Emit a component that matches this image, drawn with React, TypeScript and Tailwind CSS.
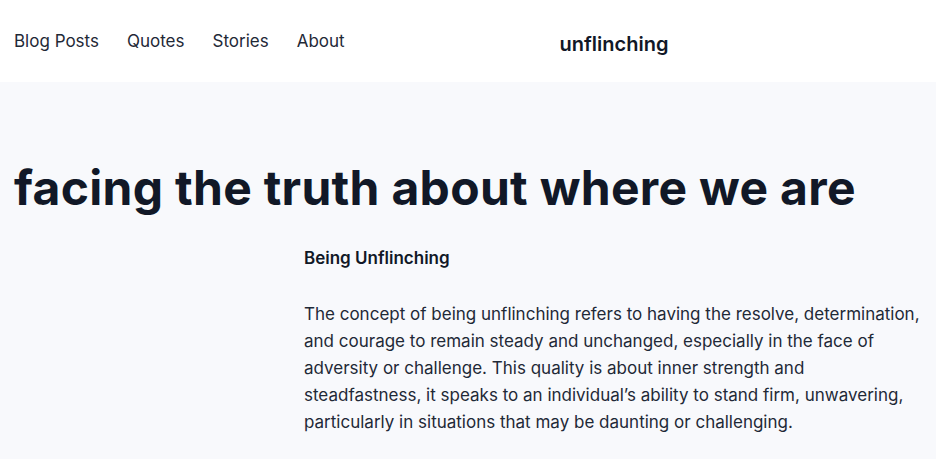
export default function App() {
  const navItems = ["Blog Posts", "Quotes", "Stories", "About"];

  return (
    <div className="min-h-screen bg-[#f8f9fc] font-['Inter',sans-serif] text-[#111827]">
      <header className="flex h-[82px] items-start bg-white px-[14px]">
        <nav className="flex gap-[28px] pt-[29px] text-[17px] text-[#1f2937]">
          {navItems.map((item) => (
            <a key={item} href="#">
              {item}
            </a>
          ))}
        </nav>
        <div className="ml-[215px] pt-[29px] text-[20px] font-semibold text-[#111827]">unflinching</div>
      </header>

      <main className="px-[14px]">
        <h1 className="pt-[76px] text-[48px] leading-[60px] font-bold tracking-[0.3px]">
          facing the truth about where we are
        </h1>
        <div className="grid grid-cols-[290px_1fr] pt-[27px]">
          <div />
          <article className="text-[17px] leading-[27px] text-[#1f2937]">
            <h2 className="font-semibold text-[#111827]">Being Unflinching</h2>
            <p className="mt-[29px]">
              The concept of being unflinching refers to having the resolve, determination, and courage to remain
              steady and unchanged, especially in the face of adversity or challenge. This quality is about inner
              strength and steadfastness, it speaks to an individual’s ability to stand firm, unwavering, particularly
              in situations that may be daunting or challenging.
            </p>
          </article>
        </div>
      </main>
    </div>
  );
}
